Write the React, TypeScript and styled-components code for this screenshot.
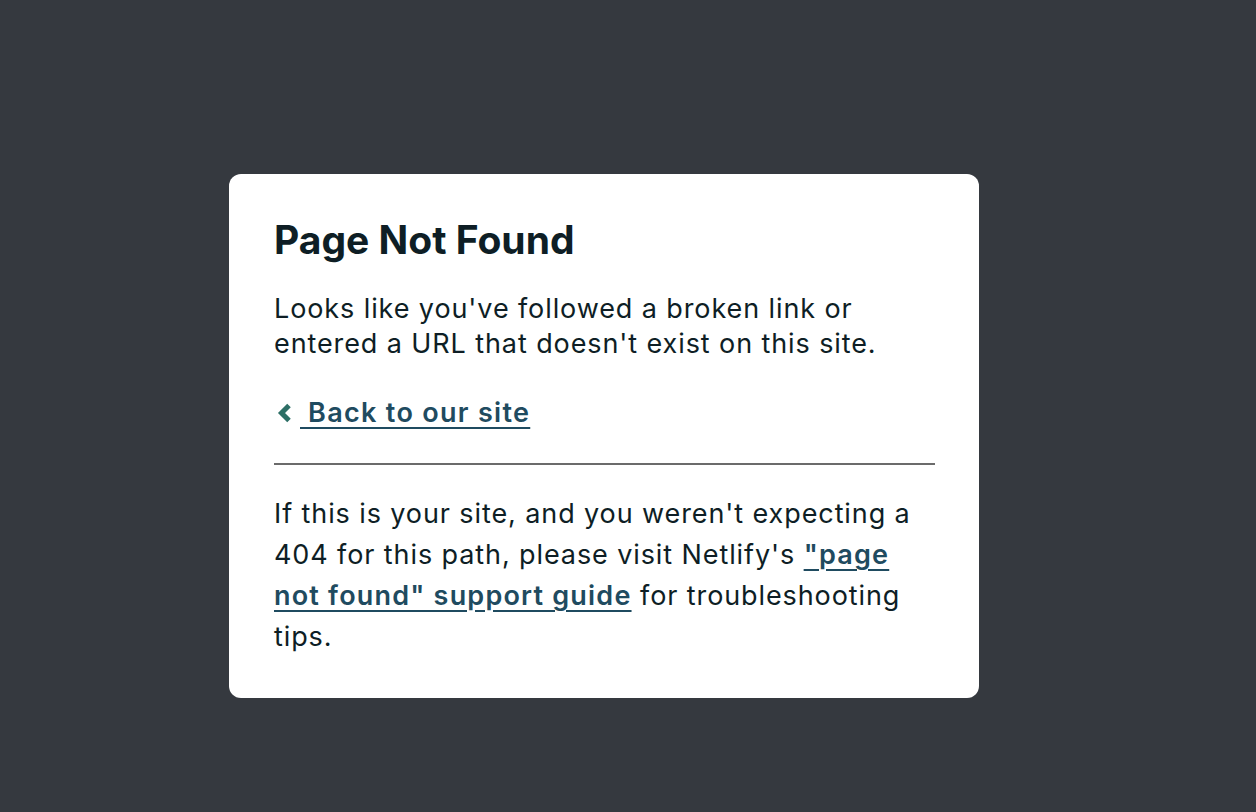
import React from 'react'
import styled, { createGlobalStyle } from 'styled-components'

const GlobalStyle = createGlobalStyle`
  html, body {
    margin: 0;
    padding: 0;
    background: #35393f;
    font-family: Inter, 'Noto Sans', sans-serif;
  }
`

const Main = styled.main`
  display: flex;
  align-items: flex-start;
  justify-content: flex-start;
  height: 812px;
  padding: 174px 0 0 229px;
  box-sizing: border-box;
`

const Card = styled.div`
  display: flex;
  flex-direction: column;
  width: 750px;
  box-sizing: border-box;
  padding: 42px 44px 41px 45px;
  background: #ffffff;
  color: #0e1e25;
  border-radius: 12px;
`

const Title = styled.h1`
  margin: 0;
  font-size: 39px;
  line-height: 48px;
  font-weight: 700;
`

const Text = styled.p`
  margin: 27px 0 0;
  font-size: 27px;
  line-height: 35px;
  font-weight: 400;
  letter-spacing: 0.9px;
`

const LastText = styled(Text)`
  margin-top: 28px;
  line-height: 41px;
`

const BackLink = styled.a`
  display: inline-flex;
  align-items: center;
  align-self: flex-start;
  margin-top: 32px;
  color: #1f4b60;
  font-size: 27px;
  line-height: 40px;
  font-weight: 600;
  letter-spacing: 1.3px;
  text-decoration: none;

  span {
    text-decoration: underline;
    text-decoration-thickness: 2px;
    text-underline-offset: 5px;
  }

  svg {
    margin-left: 1px;
    margin-right: 7px;
  }
`

const Link = styled.a`
  color: #1f4b60;
  font-weight: 600;
  letter-spacing: 1.2px;
  text-decoration: underline;
  text-decoration-thickness: 2px;
  text-underline-offset: 5px;
`

const Rule = styled.hr`
  margin: 30px 0 0;
  border: none;
  border-top: 2px solid #6b6b6b;
  height: 0;
`

const Chevron = () => (
  <svg width="18" height="22" viewBox="0 0 18 22" aria-hidden="true">
    <polyline
      points="14,3.5 6.5,11 14,18.5"
      fill="none"
      stroke="#2d6f66"
      strokeWidth="5"
      strokeLinejoin="miter"
    />
  </svg>
)

export default function App() {
  return (
    <>
      <GlobalStyle />
      <Main>
        <Card>
          <Title>Page Not Found</Title>
          <Text>
            Looks like you've followed a broken link or entered a URL that
            doesn't exist on this site.
          </Text>
          <BackLink href="#">
            <Chevron />
            <span>&nbsp;Back to our site</span>
          </BackLink>
          <Rule />
          <LastText>
            If this is your site, and you weren't expecting a 404 for this
            path, please visit Netlify's{' '}
            <Link href="#">"page not found" support guide</Link> for
            troubleshooting tips.
          </LastText>
        </Card>
      </Main>
    </>
  )
}
